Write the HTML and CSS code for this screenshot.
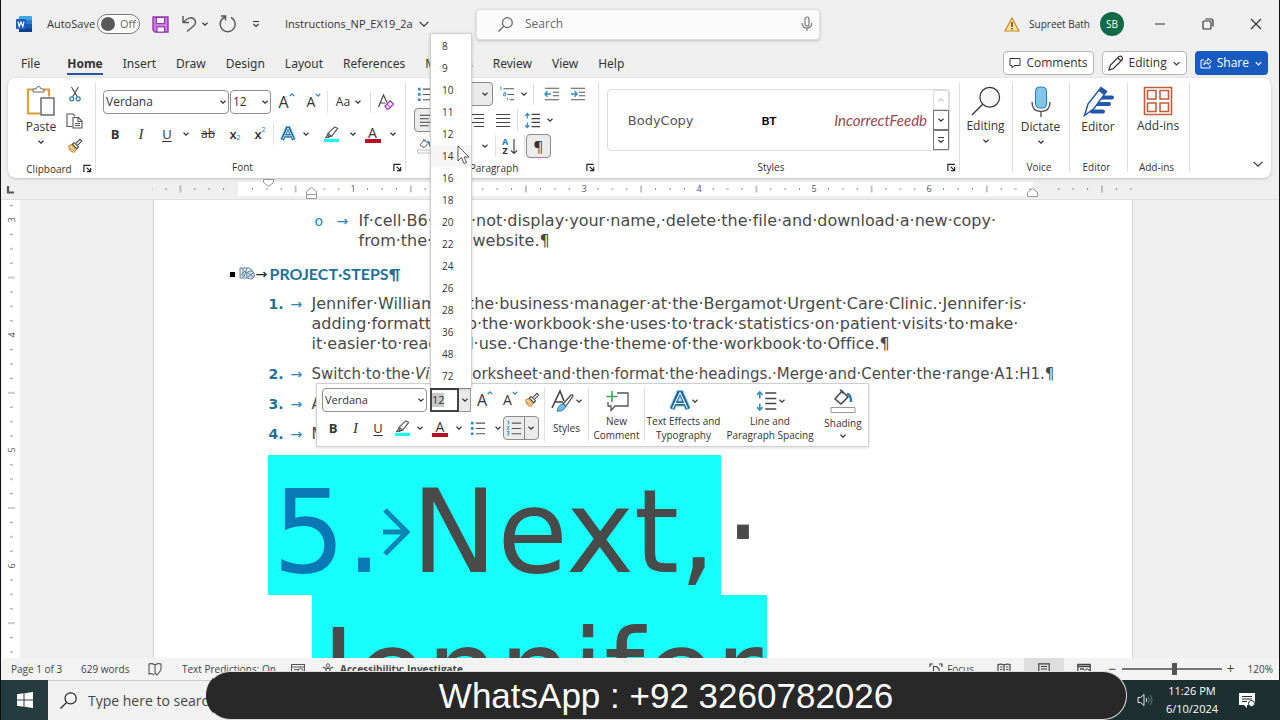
FILE: index.html
```html
<!DOCTYPE html>
<html lang="en">
<head>
<meta charset="utf-8">
<title>Instructions_NP_EX19_2a</title>
<link rel="stylesheet" href="styles.css">
</head>
<body>
<svg class="sprite" aria-hidden="true">
  <symbol id="chev" viewBox="0 0 8 8"><path d="M1.500 2.800 4 5.200 6.500 2.800" fill="none" stroke="currentColor" stroke-width="1.200" vector-effect="non-scaling-stroke"/></symbol>
  <symbol id="launch" viewBox="0 0 10 10"><path d="M1 9V1.500h7.500M4 4l4 4M8.500 4.500v4h-4" fill="none" stroke="#222" stroke-width="1.300"/></symbol>
  <symbol id="brush" viewBox="0 0 18 18"><path d="m2 9 4-2 5 5-3 4c-3 0-6-3-6-7z" fill="#fbe3b4" stroke="#d08a2a" stroke-width="1.300"/><path d="m6 7 2-2 5 5-2 2zM10 6l4.500-4.500 2 2L12 8" fill="#fff" stroke="#444" stroke-width="1.200"/><path d="m3 11 5 3M5 9l5 4" stroke="#d08a2a" fill="none"/></symbol>
  <symbol id="up" viewBox="0 0 6 6"><path d="m.8 4.200 2.200-2.400 2.200 2.400" fill="none" stroke="#2b7cae" stroke-width="1.200"/></symbol>
  <symbol id="down" viewBox="0 0 6 6"><path d="m.8 1.800 2.200 2.400 2.200-2.400" fill="none" stroke="#2b7cae" stroke-width="1.200"/></symbol>
  <symbol id="pen" viewBox="0 0 18 18"><path d="M1 13.500h16v3.500H1z" fill="#20f2f2"/><path d="m5 8 7.500-7 3 1.500L9 11H6zM6 8l3 3M5 9l-2 3h3l2-1.500" fill="#fff" stroke="#555" stroke-width="1.200"/></symbol>
  <symbol id="bullets" viewBox="0 0 18 18"><path d="M1 2h3v3H1zM1 8h3v3H1zM1 14h3v3H1z" fill="#2d8fc0"/><path d="M6.500 3.500H17M6.500 9.500H17M6.500 15.500H17" stroke="#555" stroke-width="1.200"/></symbol>
  <symbol id="numbers" viewBox="0 0 18 18"><path d="M1.500 2 3 1v4M1 7.500h2.500L1.200 10.500h2.600M1 13h2.600l-1.400 1.800q2 .2.900 1.800-.8.800-2 .1" fill="none" stroke="#2d8fc0"/><path d="M6.500 3.500H17M6.500 9.500H17M6.500 15.500H17" stroke="#555" stroke-width="1.200"/></symbol>
  <symbol id="multi" viewBox="0 0 18 18"><path d="m1 2 1.200-.8V5M5 7.500h2.500V11H5V9h2.500M9.500 13v3" fill="none" stroke="#2d8fc0"/><path d="M5 3h12M9.500 9.500H17M12 15.500h5" stroke="#555" stroke-width="1.200"/></symbol>
  <symbol id="outdent" viewBox="0 0 18 18"><path d="M1 2.500h16M10 7h7M10 11h7M1 15.500h16" stroke="#555" stroke-width="1.300"/><path d="M8 9H1m3-3L1 9l3 3" fill="none" stroke="#2d8fc0" stroke-width="1.500"/></symbol>
  <symbol id="indent" viewBox="0 0 18 18"><path d="M1 2.500h16M10 7h7M10 11h7M1 15.500h16" stroke="#555" stroke-width="1.300"/><path d="M1 9h7M5 6l3 3-3 3" fill="none" stroke="#2d8fc0" stroke-width="1.500"/></symbol>
  <symbol id="left" viewBox="0 0 16 16"><path d="M1 2.500h14M1 6.500h10M1 10.500h14M1 14.500h10" stroke="#444" stroke-width="1.200"/></symbol>
  <symbol id="right" viewBox="0 0 16 16"><path d="M1 2.500h14M5 6.500h10M1 10.500h14M5 14.500h10" stroke="#444" stroke-width="1.200"/></symbol>
  <symbol id="full" viewBox="0 0 16 16"><path d="M1 2.500h14M1 6.500h14M1 10.500h14M1 14.500h14" stroke="#444" stroke-width="1.200"/></symbol>
  <symbol id="spacing" viewBox="0 0 18 18"><path d="M3.500 2v5M1.300 4l2.200-2.500L5.700 4M3.500 11v5m-2.200-2 2.200 2.500L5.700 14" fill="none" stroke="#2d8fc0" stroke-width="1.300"/><path d="M8 2.500h9M8 7h9M8 11h9M8 15.500h9" stroke="#444" stroke-width="1.200"/></symbol>
  <symbol id="bucket" viewBox="0 0 26 26"><path d="m5 11 7-8 6 6-7 7zM10 1.500l3.500 4" fill="#fff" stroke="#444" stroke-width="1.500"/><path d="M17 6q4 0 4 8" fill="none" stroke="#2b7cae" stroke-width="2.400"/><path d="M1 19.500h24v5H1z" fill="#fff" stroke="#999"/></symbol>
  <symbol id="fx" viewBox="0 0 22 22"><path d="M3 19 10 3h2l7 16M6.500 13.500h9" fill="none" stroke="#83c6ec" stroke-width="6"/><path d="M3 19 10 3h2l7 16M6.500 13.500h9" fill="none" stroke="#1a6294" stroke-width="4"/><path d="M3.500 18.500 11 2.500l7.500 16M6.500 13.500h9" fill="none" stroke="#fff" stroke-width="1.100"/></symbol>
  <symbol id="lens" viewBox="0 0 32 32"><circle cx="20" cy="12" r="10.500" fill="#f7f7f7" stroke="currentColor" stroke-width="1.200" vector-effect="non-scaling-stroke"/><path d="M12.500 19.500 1 31" stroke="currentColor" stroke-width="1.300" vector-effect="non-scaling-stroke"/></symbol>
</svg>

<div class="window">
  <header class="titlebar">
    <div class="quick">
      <svg width="16" height="16" viewBox="0 0 16 16"><rect x="3" width="13" height="16" rx="1" fill="#41a5ee"/><path d="M3 4h13v4H3z" fill="#2b7cd3"/><path d="M3 8h13v4H3z" fill="#185abd"/><path d="M3 12h13v4H3z" fill="#103f91"/><rect y="3" width="10" height="10" rx="1" fill="#1b5cbe"/><path d="m2 5.500 1.200 5L5 6l1.800 4.500 1.200-5" fill="none" stroke="#fff" stroke-width="1.200"/></svg>
      <label for="autosave">AutoSave</label>
      <span class="toggle"><input type="checkbox" id="autosave"><span>Off</span></span>
      <button aria-label="Save"><svg width="17" height="17" viewBox="0 0 17 17"><path d="M1 1h15v15H3l-2-2z" fill="#c77fdb" stroke="#9437ad" stroke-width="1.400"/><path d="M4.500 1.500h8v6h-8zM5 11h7.500v5H5z" fill="#fff" stroke="#9437ad" stroke-width="1.200"/></svg></button>
      <button aria-label="Undo"><svg width="17" height="18" viewBox="0 0 17 18"><path d="M2 1v6.500h6M2.500 7q7-7 11-2.500Q16 8 12.500 11L6 16.500" fill="none" stroke="#555" stroke-width="1.400"/></svg></button>
      <button aria-label="Undo list"><svg width="8" height="8"><use href="#chev"/></svg></button>
      <button aria-label="Redo"><svg width="18" height="18" viewBox="0 0 18 18"><path d="M2 1h4.500v4.500M6 2Q1 4.500 1.200 9.500A7.500 7.500 0 1 0 12 2.500" fill="none" stroke="#555" stroke-width="1.400"/></svg></button>
      <button aria-label="Customize toolbar"><svg width="8" height="8" viewBox="0 0 8 8"><path d="M1 1.500h6M1.500 4 4 6.500 6.500 4" fill="none" stroke="#333" stroke-width="1.200"/></svg></button>
      <button class="doc-name">Instructions_NP_EX19_2a <svg width="14" height="14"><use href="#chev"/></svg></button>
    </div>
    <div class="search">
      <svg width="15" height="15"><use href="#lens"/></svg>
      <input type="search" aria-label="Search" placeholder="Search">
      <svg width="12" height="16" viewBox="0 0 12 16"><rect x="4" y="1" width="4" height="9" rx="2" fill="none" stroke="#777" stroke-width="1.200"/><path d="M1.200 7q0 5 4.800 5t4.800-5M6 12v3" fill="none" stroke="#777" stroke-width="1.200"/></svg>
    </div>
    <div class="account">
      <svg width="16" height="15" viewBox="0 0 16 15"><path d="M8 1 15 14H1z" fill="#ffe3a1" stroke="#c98a25" stroke-width="1.200"/><path d="M8 5v5M8 11v1.500" stroke="#5a4110" stroke-width="1.500"/></svg>
      <span class="user">Supreet Bath</span>
      <span class="avatar">SB</span>
      <button aria-label="Minimize"><svg width="12" height="12" viewBox="0 0 12 12"><path d="M1 6h10" stroke="#333"/></svg></button>
      <button aria-label="Restore"><svg width="12" height="12" viewBox="0 0 12 12"><rect x="1" y="3" width="8" height="8" rx="1" fill="none" stroke="#333" stroke-width="1.200"/><path d="M3.500 1H9q2 0 2 2v5.500" fill="none" stroke="#333" stroke-width="1.200"/></svg></button>
      <button aria-label="Close"><svg width="12" height="12" viewBox="0 0 12 12"><path d="m1 1 10 10M11 1 1 11" stroke="#333" stroke-width="1.200"/></svg></button>
    </div>
  </header>

  <nav class="tabs">
    <button class="file">File</button><button class="active">Home</button><button>Insert</button><button>Draw</button><button>Design</button><button>Layout</button><button>References</button><button>Mailings</button><button>Review</button><button>View</button><button>Help</button>
    <div class="tab-actions">
      <button class="outlined comments"><svg width="12" height="12" viewBox="0 0 12 12"><path d="M1 1.500h10v7H5L3 11V8.500H1z" fill="none" stroke="#333"/></svg>Comments</button>
      <button class="outlined"><svg width="16" height="16" viewBox="0 0 16 16"><path d="m1 15 1.500-5L11 1.500q2-1 3 .5t0 3L5.500 13.500zM10 3l3 3" fill="none" stroke="#333" stroke-width="1.200"/></svg>Editing<svg width="9" height="9"><use href="#chev"/></svg></button>
      <button class="share"><svg width="12" height="12" viewBox="0 0 12 12"><path d="M4 3H1v8h9V8M4 8q0-4.500 4-4.500V1.200L11.300 4.500 8 7.500V5.700q-3 0-4 2.300z" fill="none" stroke="#fff"/></svg>Share<svg width="9" height="9"><use href="#chev"/></svg></button>
    </div>
  </nav>

  <section class="ribbon">
    <div class="group clipboard">
      <div class="group-body">
        <button class="big-btn"><svg width="30" height="31" viewBox="0 0 30 31"><path d="M9 3.500H2v24h12M18 3.500h5v7" fill="none" stroke="#dda13b" stroke-width="2.200"/><path d="M7 6V3h3q.5-2.500 2.500-2.500T15 3h3v3z" fill="#fff" stroke="#666"/><rect x="15" y="12" width="13" height="17" fill="#fafafa" stroke="#555" stroke-width="1.300"/></svg><span>Paste</span><svg width="8" height="8"><use href="#chev"/></svg></button>
        <div class="clip-tools">
          <button aria-label="Cut"><svg width="12" height="16" viewBox="0 0 12 16"><path d="m2.500 1 6 10M9.500 1l-6 10" stroke="#444" stroke-width="1.100"/><circle cx="2.800" cy="12.800" r="2" fill="none" stroke="#2b7cae" stroke-width="1.200"/><circle cx="9.200" cy="12.800" r="2" fill="none" stroke="#2b7cae" stroke-width="1.200"/></svg></button>
          <button aria-label="Copy"><svg width="17" height="16" viewBox="0 0 17 16"><path d="M6 13.500H1V1h6l2 2M7 4.500h5.500L16 8v7H7zM12 5v3.500h4M9 10.500h5M9 12.500h5" fill="none" stroke="#555" stroke-width="1.100"/></svg></button>
          <button aria-label="Format painter"><svg width="16" height="16"><use href="#brush"/></svg></button>
        </div>
      </div>
      <footer><span>Clipboard</span><button aria-label="Clipboard settings"><svg width="9" height="9"><use href="#launch"/></svg></button></footer>
    </div>

    <div class="group font">
      <div class="group-body">
        <div class="font-row1">
          <span class="combo"><select aria-label="Font"><option>Verdana</option></select><svg width="8" height="8"><use href="#chev"/></svg></span>
          <span class="combo"><select aria-label="Font size"><option>12</option></select><svg width="8" height="8"><use href="#chev"/></svg></span>
          <button class="grow">A<svg width="6" height="6"><use href="#up"/></svg></button>
          <button class="shrink">A<svg width="6" height="6"><use href="#down"/></svg></button>
          <i class="sep"></i>
          <button class="case">Aa<svg width="8" height="8"><use href="#chev"/></svg></button>
          <i class="sep"></i>
          <button aria-label="Clear formatting"><svg width="18" height="18" viewBox="0 0 18 18"><path d="M1.500 14 6.500 2 10 9.500M3 10h5.500" fill="none" stroke="#444" stroke-width="1.200"/><path d="m8 13 5-5 3.500 3-5 5H10z" fill="#fff" stroke="#a33bb8" stroke-width="1.300"/><path d="m10 11 3.500 3" stroke="#a33bb8"/></svg></button>
        </div>
        <div class="font-row2">
          <button class="b">B</button><button class="i">I</button><button class="u">U</button><button aria-label="Underline style"><svg width="8" height="8"><use href="#chev"/></svg></button>
          <button class="s">ab</button><button class="x">x<sub>2</sub></button><button class="x">x<sup>2</sup></button><i class="sep"></i>
          <button aria-label="Text effects"><svg width="16" height="16"><use href="#fx"/></svg></button><button aria-label="More effects"><svg width="8" height="8"><use href="#chev"/></svg></button>
          <button aria-label="Highlight"><svg width="17" height="17"><use href="#pen"/></svg></button><button aria-label="Highlight colors"><svg width="8" height="8"><use href="#chev"/></svg></button>
          <button class="color">A</button><button aria-label="Font colors"><svg width="8" height="8"><use href="#chev"/></svg></button>
        </div>
      </div>
      <footer><span>Font</span><button aria-label="Font settings"><svg width="9" height="9"><use href="#launch"/></svg></button></footer>
    </div>

    <div class="group paragraph">
      <div class="group-body">
        <div class="para-row1">
          <button aria-label="Bullets"><svg width="16" height="16"><use href="#bullets"/></svg></button>
          <button aria-label="Bullet list"><svg width="8" height="8"><use href="#chev"/></svg></button>
          <button class="pressed split" aria-label="Numbering"><svg width="16" height="16"><use href="#numbers"/></svg><svg width="8" height="8"><use href="#chev"/></svg></button>
          <button aria-label="Multilevel"><svg width="16" height="16"><use href="#multi"/></svg></button><button aria-label="Multilevel list"><svg width="8" height="8"><use href="#chev"/></svg></button>
          <i class="sep"></i>
          <button aria-label="Decrease indent"><svg width="16" height="16"><use href="#outdent"/></svg></button>
          <button aria-label="Increase indent"><svg width="16" height="16"><use href="#indent"/></svg></button>
        </div>
        <div class="para-row2">
          <button class="pressed" aria-label="Align left"><svg width="14" height="14"><use href="#left"/></svg></button>
          <button aria-label="Center"><svg width="14" height="14"><use href="#full"/></svg></button>
          <button aria-label="Align right"><svg width="16" height="16"><use href="#right"/></svg></button>
          <button aria-label="Justify"><svg width="16" height="16"><use href="#full"/></svg></button>
          <i class="sep"></i>
          <button aria-label="Line spacing"><svg width="17" height="17"><use href="#spacing"/></svg></button><button aria-label="Spacing options"><svg width="8" height="8"><use href="#chev"/></svg></button>
        </div>
        <div class="para-row3">
          <button aria-label="Shading"><svg width="16" height="16"><use href="#bucket"/></svg></button>
          <button aria-label="Borders"><svg width="16" height="16" viewBox="0 0 16 16"><path d="M1 1h14v14H1zM8 1v14M1 8h14" fill="none" stroke="#666" stroke-dasharray="1 1"/></svg></button>
          <button aria-label="Border list"><svg width="8" height="8"><use href="#chev"/></svg></button>
          <i class="sep"></i>
          <button class="sort" aria-label="Sort"><span><b>A</b><b>Z</b></span><svg width="8" height="17" viewBox="0 0 8 17"><path d="M4 1v14.500M1 12.500l3 3 3-3" fill="none" stroke="#444" stroke-width="1.200"/></svg></button>
          <i class="sep"></i>
          <button class="pressed pilcrow">¶</button>
        </div>
      </div>
      <footer><span>Paragraph</span><button aria-label="Paragraph settings"><svg width="9" height="9"><use href="#launch"/></svg></button></footer>
    </div>

    <div class="group styles">
      <div class="group-body">
        <div class="gallery">
          <button class="st-body">BodyCopy</button><button class="st-bt">BT</button><button class="st-inc">IncorrectFeedb</button>
          <div class="gallery-nav">
            <button aria-label="Previous styles" disabled><svg width="8" height="8" viewBox="0 0 8 8"><path d="M1.500 5.200 4 2.800l2.500 2.400" fill="none" stroke="#aaa"/></svg></button>
            <button aria-label="Next styles"><svg width="8" height="8"><use href="#chev"/></svg></button>
            <button aria-label="More styles"><svg width="8" height="8" viewBox="0 0 8 8"><path d="M1 1.500h6M1.500 4 4 6.500 6.500 4" fill="none" stroke="#333" stroke-width="1.200"/></svg></button>
          </div>
        </div>
      </div>
      <footer><span>Styles</span><button aria-label="Style settings"><svg width="9" height="9"><use href="#launch"/></svg></button></footer>
    </div>

    <div class="group w-editing">
      <div class="group-body"><button class="big-btn"><svg width="30" height="30"><use href="#lens"/></svg><span>Editing</span><svg width="8" height="8"><use href="#chev"/></svg></button></div>
      <footer></footer>
    </div>
    <div class="group w-voice">
      <div class="group-body"><button class="big-btn"><svg width="20" height="31" viewBox="0 0 20 31"><rect x="4.500" y="1" width="11" height="21" rx="4" fill="#83c4ea" stroke="#2b7cae"/><path d="M1 16q0 9.500 9 9.500t9-9.500M10 25.500V31" fill="none" stroke="#555" stroke-width="1.400"/></svg><span>Dictate</span><svg width="8" height="8"><use href="#chev"/></svg></button></div>
      <footer><span>Voice</span></footer>
    </div>
    <div class="group w-editor">
      <div class="group-body"><button class="big-btn"><svg width="31" height="31" viewBox="0 0 31 31"><path d="M17 11.500h12M14 18h12M9 25.500h11" stroke="#2358a8" stroke-width="4" stroke-linecap="round"/><path d="M1.500 29.500 5 18 18 1.500l5.500 4L11 22.500z" fill="#fff" stroke="#2358a8" stroke-width="1.500"/><path d="m18 1.500 5.500 4L21 9l-5.500-4z" fill="#2358a8"/></svg><span>Editor</span></button></div>
      <footer><span>Editor</span></footer>
    </div>
    <div class="group w-addins">
      <div class="group-body"><button class="big-btn"><svg width="30" height="30" viewBox="0 0 30 30"><path d="M1.500 1.500h27v27h-27zM4.500 4.500H13V13H4.500zM17 4.500h8.500V13H17zM4.500 17H13v8.500H4.500zM17 17h8.500v8.500H17z" fill="none" stroke="#bd5f3e" stroke-width="1.600"/></svg><span>Add-ins</span></button></div>
      <footer><span>Add-ins</span></footer>
    </div>
    <div class="group w-end"><button class="collapse" aria-label="Collapse ribbon"><svg width="14" height="14"><use href="#chev"/></svg></button></div>
  </section>

  <div class="hruler">
    <svg class="corner" width="10" height="10" viewBox="0 0 10 10"><path d="M2 1v6.500h6" fill="none" stroke="#555" stroke-width="2.200"/></svg>
    <svg class="scale" width="982" height="22" viewBox="0 0 982 22">
      <defs><pattern id="hticks" x="86" y="0" width="115.200" height="22" patternUnits="userSpaceOnUse"><path d="M14.400 10v2M28.800 10v2M43.200 10v2M72 10v2M86.400 10v2M100.800 10v2M57.600 7.500v7" stroke="#888"/></pattern></defs>
      <path d="M86 4h795v14H86z" fill="#fff"/>
      <path d="M0 0h982v22H0z" fill="url(#hticks)"/>
      <g class="ruler-text"><text x="201" y="14">1</text><text x="316" y="14">2</text><text x="432" y="14">3</text><text x="547" y="14">4</text><text x="662" y="14">5</text><text x="777" y="14">6</text></g>
      <path d="M111.500 1.500h10v3l-5 4-5-4zM154.500 20.500v-7l5-4 5 4v7zM154.500 16.500h10M875.500 18.500v-4l5-4 5 4v4z" fill="#fff" stroke="#999"/>
    </svg>
  </div>

  <main class="workspace">
    <svg class="vruler" width="18" height="458" viewBox="0 0 18 458">
      <defs><pattern id="vticks" x="0" y="20" width="18" height="115.200" patternUnits="userSpaceOnUse"><path d="M8 14.400h3M8 28.800h3M8 43.200h3M8 72h3M8 86.400h3M8 100.800h3M6 57.600h7" stroke="#999"/></pattern></defs>
      <path d="M0 0h18v458H0z" fill="url(#vticks)"/>
      <g class="ruler-text"><text transform="translate(13 20) rotate(-90)">3</text><text transform="translate(13 135) rotate(-90)">4</text><text transform="translate(13 250) rotate(-90)">5</text><text transform="translate(13 366) rotate(-90)">6</text></g>
    </svg>
    <article class="page">
      <div class="sub-item"><span class="ring">o</span><span class="tab">→</span><p>If·cell·B6·does·not·display·your·name,·delete·the·file·and·download·a·new·copy·<br>from·the·SAM·website.¶</p></div>
      <h1><span class="square"></span><svg width="17" height="16" viewBox="0 0 17 16"><path d="M1 2h9l3 2v8H1zM4 2v9M1 10l5-5 7 7M8 2l-3 9" fill="#e4edf3" stroke="#64849a"/><circle cx="11.500" cy="9" r="4" fill="#cfdde6" stroke="#64849a"/><path d="m9 7 5 4M14 7l-5 4" stroke="#64849a"/></svg><span class="tab">→</span>PROJECT·STEPS¶</h1>
      <ol>
        <li><b>1.</b><span class="tab">→</span><p>Jennifer·Williams·is·the·business·manager·at·the·Bergamot·Urgent·Care·Clinic.·Jennifer·is·<br>adding·formatting·to·the·workbook·she·uses·to·track·statistics·on·patient·visits·to·make·<br>it·easier·to·read·and·use.·Change·the·theme·of·the·workbook·to·Office.¶</p></li>
        <li class="small"><b>2.</b><span class="tab">→</span><p>Switch·to·the·<em>Visits</em>·worksheet·and·then·format·the·headings.·Merge·and·Center·the·range·A1:H1.¶</p></li>
        <li class="small"><b>3.</b><span class="tab">→</span><p>A</p></li>
        <li class="small"><b>4.</b><span class="tab">→</span><p>M</p></li>
      </ol>
      <div class="huge">
        <div><span class="marked"><span class="num">5.</span><svg width="29" height="54" viewBox="0 0 29 54"><path d="M1 27h23M3 5l22 22L3 49" fill="none" stroke="#0d86b5" stroke-width="5"/></svg>Next,</span><span class="after">·</span></div>
        <div class="second"><span class="marked">Jennifer</span></div>
      </div>
    </article>
  </main>

  <footer class="statusbar">
    <span class="st-page">Page 1 of 3</span><span class="st-words">629 words</span>
    <svg width="14" height="13" viewBox="0 0 14 13"><path d="M7 2Q4 0 1 1v10q3-1 5 1M7 2q3-2 6-1v6M7 2v9M7 10l2 2 4-5" fill="none" stroke="#555" stroke-width="1.100"/></svg>
    <span class="st-pred">Text Predictions: On</span>
    <svg width="14" height="13" viewBox="0 0 14 13"><path d="M.5 1.500h13v10H.5zM.5 4h13M3 6.500h4" fill="none" stroke="#555" stroke-width="1.200"/><circle cx="9.500" cy="8" r="2.500" fill="none" stroke="#555"/></svg>
    <svg class="acc" width="12" height="13" viewBox="0 0 12 13"><circle cx="6" cy="2.500" r="1.700" fill="none" stroke="#555"/><path d="M.8 4 4 5.500V8l-2 4M11.200 4 8 5.500V8l2 4M4 5.500h4" fill="none" stroke="#555" stroke-width="1.200"/></svg>
    <b>Accessibility: Investigate</b>
    <div class="views">
      <button class="focus"><svg width="14" height="13" viewBox="0 0 14 13"><path d="M1 4V1h3M10 1h3v3M4.500 12V3.500h3L10 6v6z" fill="none" stroke="#444" stroke-width="1.200"/></svg>Focus</button>
      <button aria-label="Read mode"><svg width="14" height="13" viewBox="0 0 14 13"><path d="M7 2Q4 .5 1 1.500v10h12v-10Q10 .5 7 2v10M3 4h2.500M3 6.500h2.500M9 4h2.500M9 6.500h2.500" fill="none" stroke="#444" stroke-width="1.200"/></svg></button>
      <button class="current" aria-label="Print layout"><svg width="12" height="13" viewBox="0 0 12 13"><path d="M.8.800h10.400v12H.8zM3 3.500h6M3 6h6M3 8.500h6" fill="none" stroke="#444" stroke-width="1.200"/></svg></button>
      <button aria-label="Web layout"><svg width="14" height="13" viewBox="0 0 14 13"><path d="M.8 1.500h12.400v10H.8zM.8 3.500h12.400M3 6h4" fill="none" stroke="#444" stroke-width="1.300"/><circle cx="10" cy="8.500" r="2.500" fill="none" stroke="#444"/></svg></button>
      <button class="zoom-step" aria-label="Zoom out">−</button>
      <input type="range" aria-label="Zoom" min="0" max="100" value="53">
      <button class="zoom-step" aria-label="Zoom in">+</button>
      <span class="percent">120%</span>
    </div>
  </footer>

  <section class="mini">
    <div class="mini-left">
      <div class="mini-row1">
        <span class="combo"><select aria-label="Font name"><option>Verdana</option></select><svg width="8" height="8"><use href="#chev"/></svg></span>
        <div class="size">
          <input aria-label="Size" value="12"><button aria-label="Sizes"><svg width="8" height="8"><use href="#chev"/></svg></button>
          <div class="sizes"><button>8</button><button>9</button><button>10</button><button>11</button><button>12</button><button class="hover">14</button><button>16</button><button>18</button><button>20</button><button>22</button><button>24</button><button>26</button><button>28</button><button>36</button><button>48</button><button>72</button>
            <svg class="cursor" width="14" height="20" viewBox="0 0 14 20"><path d="M1 1v15l3.500-3.500L7 18.500l2.500-1L7.200 12H12z" fill="#fff" stroke="#555"/></svg>
          </div>
        </div>
        <button class="grow">A<svg width="6" height="6"><use href="#up"/></svg></button>
        <button class="shrink">A<svg width="6" height="6"><use href="#down"/></svg></button>
        <button aria-label="Format painter"><svg width="16" height="16"><use href="#brush"/></svg></button>
      </div>
      <div class="mini-row2">
        <button class="b">B</button><button class="i">I</button><button class="u">U</button>
        <button aria-label="Highlight"><svg width="17" height="17"><use href="#pen"/></svg></button><button aria-label="Highlight colors"><svg width="8" height="8"><use href="#chev"/></svg></button>
        <button class="color">A</button><button aria-label="Font colors"><svg width="8" height="8"><use href="#chev"/></svg></button>
        <button aria-label="Bullets"><svg width="16" height="16"><use href="#bullets"/></svg></button><button aria-label="Bullet list"><svg width="8" height="8"><use href="#chev"/></svg></button>
        <button class="pressed split" aria-label="Numbering"><svg width="16" height="16"><use href="#numbers"/></svg><i class="bar"></i><svg width="8" height="8"><use href="#chev"/></svg></button>
      </div>
    </div>
    <button class="mini-big m-styles"><span><svg width="24" height="24" viewBox="0 0 24 24"><path d="M1 19 9 2l4 10M4 13h8" fill="none" stroke="#444" stroke-width="1.600"/><path d="m12 15 8-9q2-1 2 1l-7 10z" fill="#fff" stroke="#444" stroke-width="1.200"/><path d="M12 15q-4 0-6 7 7 1 9-5z" fill="#79bde6" stroke="#2b7cae"/></svg><svg width="8" height="8"><use href="#chev"/></svg></span><em>Styles</em></button>
    <button class="mini-big m-comment"><span><svg width="24" height="22" viewBox="0 0 24 22"><path d="M12 3h11v13H10l-4 4.500V16H3v-4" fill="none" stroke="#555" stroke-width="1.300"/><path d="M7 1v11M1.500 6.500h11" stroke="#36a95a" stroke-width="1.600"/></svg></span><em>New<br>Comment</em></button>
    <button class="mini-big m-fx"><span><svg width="22" height="22"><use href="#fx"/></svg><svg width="8" height="8"><use href="#chev"/></svg></span><em>Text Effects and<br>Typography</em></button>
    <button class="mini-big m-line"><span><svg width="23" height="22"><use href="#spacing"/></svg><svg width="8" height="8"><use href="#chev"/></svg></span><em>Line and<br>Paragraph Spacing</em></button>
    <button class="mini-big m-shade"><span><svg width="26" height="26"><use href="#bucket"/></svg></span><em>Shading</em><svg width="8" height="8"><use href="#chev"/></svg></button>
  </section>
</div>

<div class="taskbar">
  <button class="start" aria-label="Start"><svg width="16" height="16" viewBox="0 0 16 16"><path d="m0 2.200 6.500-.9v6.200H0zM7.500 1.200 16 0v7.500H7.500zM0 8.500h6.500v6.200L0 13.800zM7.500 8.500H16V16l-8.500-1.200z" fill="#fff"/></svg></button>
  <label class="task-search"><svg width="17" height="17"><use href="#lens"/></svg><input type="text" placeholder="Type here to search"></label>
  <div class="tray">
    <svg width="16" height="14" viewBox="0 0 16 14"><path d="M1 4.500h2.500L7 1.500v11L3.500 9.500H1z" fill="none" stroke="#e6eaea"/><path d="M9 5q1.500 2 0 4" fill="none" stroke="#e6eaea"/><path d="M11 3.500q3 3.500 0 7M13 2q4 5 0 10" fill="none" stroke="#6f7d7e"/></svg>
    <div class="clock"><span>11:26 PM</span><span>6/10/2024</span></div>
    <svg width="17" height="17" viewBox="0 0 17 17"><path d="M0 1h16v12H8v3l-3-3H0z" fill="#fff"/><path d="M3 4.500h10M3 7h10M3 9.500h5" stroke="#1c3031"/><circle cx="12.500" cy="11.500" r="3" fill="#fff" stroke="#1c3031"/></svg>
  </div>
  <div class="banner">WhatsApp : +92 3260782026</div>
</div>
</body>
</html>
```

FILE: styles.css
```css
* { box-sizing: border-box; }
body {
  margin: 0;
  height: 100vh;
  display: flex;
  flex-direction: column;
  overflow: hidden;
  background: #efefef;
  color: #333;
  font: 11px/16px "Open Sans", "Noto Sans", sans-serif;
}
.sprite { position: absolute; width: 0; height: 0; }
svg { display: block; flex: none; }
button {
  display: flex;
  align-items: center;
  justify-content: center;
  padding: 0;
  border: 0;
  background: none;
  color: inherit;
  font: inherit;
  white-space: nowrap;
}
input, select { font: inherit; color: inherit; border: 0; background: none; padding: 0; margin: 0; outline: 0; min-width: 0; }
.sep { width: 1px; height: 22px; background: #e1e1e1; }
.pressed { background: #ebebeb; border: 1px solid #8c8c8c; border-radius: 4px; }

.window {
  position: relative;
  flex: 1;
  min-height: 0;
  display: flex;
  flex-direction: column;
  border: solid #111;
  border-width: 0 1px;
}

/* Title bar */
.titlebar { display: flex; align-items: center; height: 48px; flex: none; }
.quick {
  flex: none;
  width: 475px;
  padding-left: 15px;
  display: grid;
  grid-template-columns: 31px 50px 55px 29px 20px 18px 33px 33px auto;
  align-items: center;
  justify-items: start;
}
.toggle {
  width: 43px;
  height: 20px;
  display: flex;
  align-items: center;
  gap: 5px;
  padding-left: 3px;
  border: 1px solid #777;
  border-radius: 10px;
  background: #fff;
  color: #666;
}
.toggle input { appearance: none; width: 14px; height: 14px; border-radius: 50%; background: #5a5a5a; }
.doc-name { gap: 4px; }
.search {
  flex: 0 1 344px;
  height: 31px;
  display: flex;
  align-items: center;
  gap: 12px;
  padding: 0 6px 0 21px;
  background: #fbfbfb;
  border: 1px solid #e0e0e0;
  border-radius: 4px;
  box-shadow: 0 1px 3px #0003;
  color: #666;
}
.search input { flex: 1; font-size: 12px; }
.search input::placeholder { color: #666; }
.account { margin-left: auto; display: flex; align-items: center; padding-right: 17px; }
.account > svg { margin-right: 9px; }
.user { font-size: 10px; }
.avatar {
  width: 24px;
  height: 24px;
  margin: 0 30px 0 10px;
  border-radius: 50%;
  background: #0f6b47;
  color: #fff;
  font-size: 10px;
  line-height: 24px;
  text-align: center;
}
.account button { margin-left: 36px; }
.account .avatar + button { margin-left: 0; }

/* Tabs */
.tabs { display: flex; align-items: center; gap: 20px; height: 30px; flex: none; padding: 0 11px 0 20px; font-size: 12px; }
.tabs > button { height: 24px; padding-top: 3px; border-bottom: 2px solid transparent; font-family: "Noto Sans", sans-serif; }
.tabs > .file { margin-right: 7px; }
.tabs > .active { font-weight: 700; border-color: #2b579a; }
.tab-actions { margin-left: auto; display: flex; gap: 8px; align-items: center; }
.tab-actions button { height: 24px; gap: 5px; padding: 0 5px; border-radius: 4px; }
.tab-actions .outlined { background: #fff; border: 1px solid #b5b5b5; }
.tab-actions .share { background: #185abd; color: #fff; }

/* Ribbon */
.ribbon {
  display: flex;
  flex: none;
  height: 100px;
  margin: 0 8px 0 7px;
  background: #fff;
  border-radius: 8px;
  box-shadow: 0 1px 3px #0003;
}
.group {
  display: flex;
  flex-direction: column;
  flex: none;
  position: relative;
}
.group:not(.clipboard)::before {
  content: "";
  position: absolute;
  inset: 4px auto 6px 0;
  width: 1px;
  background: #dedede;
}
.group-body { flex: 1; }
.group footer { height: 21px; padding-bottom: 1px; display: grid; grid-template-columns: 1fr auto 1fr; align-items: center; padding-right: 3px; font-size: 10px; }
.group footer span { grid-column: 2; }
.group footer button { grid-column: 3; justify-self: end; }
.clipboard { width: 87px; }
.clipboard footer { margin-left: -2px; }
.font { width: 310px; padding-left: 8px; }
.font footer { margin-left: -20px; }
.paragraph { width: 193px; }
.paragraph footer { margin-left: -12px; }
.styles { flex: 1; }
.styles footer { margin-left: -12px; }
.w-editing { width: 53px; }
.w-voice { width: 57px; }
.w-editor { width: 58px; }
.w-addins { width: 62px; }
.w-end { width: 82px; align-items: flex-end; justify-content: flex-end; padding: 0 6px 7px 0; }
.big-btn { flex-direction: column; justify-content: flex-start; width: 100%; padding-top: 8px; font-size: 12px; }
.big-btn span { margin: 2px 0 3px; }
.clipboard .group-body { display: flex; }
.clipboard .big-btn { width: 58px; padding-left: 8px; }
.clip-tools { display: grid; grid-template-rows: 32px 22px 28px; }

.combo { display: grid; grid-template-columns: 1fr; align-items: center; height: 24px; border: 1px solid #8f8f8f; border-radius: 4px; background: #fff; }
.combo select { grid-area: 1 / 1; appearance: none; width: 100%; height: 100%; padding-left: 2px; font-size: 12px; line-height: 20px; }
.combo svg { grid-area: 1 / 1; justify-self: end; margin-right: 1px; pointer-events: none; }
.font-row1, .font-row2, .para-row1, .para-row2, .para-row3 { display: grid; align-items: center; }
.font-row1 > .sep, .font-row2 > .sep { justify-self: start; }
.font-row1 { grid-template-columns: 126px 41px 29px 24px 1px 40px 1px 28px; column-gap: 1px; height: 24px; margin-top: 12px; }
.font-row2 { grid-template-columns: 24px 28px 24px 14px 30px 24px 26px 1px 28px 8px 42px 1px 39px 1px; height: 28px; margin-top: 6px; }
.grow, .shrink { align-items: flex-start; line-height: 20px; }
.grow { font-size: 16px; }
.shrink { font-size: 14px; }
.case { gap: 4px; font-size: 12px; }
.b { font-weight: 700; font-size: 13px; }
.i { font: italic 15px "Liberation Serif", serif; }
.u { text-decoration: underline; text-underline-offset: 2px; font-size: 13px; }
.s { text-decoration: line-through; font-size: 12px; }
.x { font-size: 13px; font-weight: 600; }
.x sub, .x sup { color: #2b7cae; font-size: 7px; line-height: 8px; font-weight: 400; }
.x sub { align-self: flex-end; }
.x sup { align-self: flex-start; }
.color { justify-self: center; width: 16px; height: 17px; border-bottom: 4px solid #b90f22; font-size: 14px; line-height: 13px; }
.paragraph .group-body { padding: 4px 0 0 9px; }
.para-row1 { grid-template-columns: 22px 12px 45px 27px 8px 11px 26px 26px; height: 24px; }
.para-row1 .pressed, .para-row2 .pressed { height: 24px; }
.split { justify-content: space-between; padding: 0 3px 0 2px; }
.para-row1 .sep, .para-row2 .sep, .para-row3 .sep { justify-self: center; }
.para-row2 { grid-template-columns: 24px 26px 26px 26px 3px 26px 10px; height: 24px; margin-top: 2px; }
.para-row3 { grid-template-columns: 22px 42px 14px 6px 24px 4px 25px; height: 24px; margin-top: 2px; }
.sort { gap: 2px; }
.sort span { display: grid; line-height: 9px; font-size: 9px; }
.sort b:first-child { color: #2b7cae; }
.pilcrow { height: 24px; font-size: 15px; }

.gallery { display: grid; grid-template-columns: 1fr 1fr 1fr 16px; height: 62px; margin: 11px 9px 0 9px; border: 1px solid #dcdcdc; border-radius: 4px; }
.gallery > button { overflow: hidden; margin: 0 6px 0 3px; }
.st-body { font: 13px "DejaVu Sans", sans-serif; color: #555; }
.st-bt { font: 700 12px Lato, sans-serif; color: #000; }
.gallery > .st-inc { justify-content: flex-end; font: italic 15px Lato, sans-serif; color: #97474e; }
.gallery-nav { display: grid; grid-template-rows: 1fr 1fr 1fr; }
.gallery-nav button { border: 1px solid #777; }
.gallery-nav button:disabled { border-color: #dcdcdc; }

/* Rulers and page */
.hruler { display: flex; align-items: center; flex: none; height: 22px; padding-right: 14px; border-bottom: 1px solid #e0e0e0; }
.corner { margin: 2px 4px 0 5px; }
.scale { margin: 0 auto; }
.ruler-text { font-size: 9px; fill: #555; text-anchor: middle; }
.workspace { flex: 1; min-height: 0; display: flex; align-items: flex-start; padding-right: 14px; overflow: hidden; }
.vruler { background: #fff; margin-left: 1px; }
.page {
  width: 980px;
  height: 100%;
  margin: 0 auto;
  padding: 11px 0 0 115px;
  overflow: hidden;
  background: #fff;
  border: solid #d8d8d8;
  border-width: 0 1px;
  color: #4a4a4a;
  font: 16px/20px "DejaVu Sans", sans-serif;
  font-variant-ligatures: none;
  white-space: nowrap;
}
.page p { margin: 0; }
.tab { color: #2a86b8; font-family: "Open Sans", "DejaVu Sans", sans-serif; font-size: 14px; }
.sub-item { display: grid; grid-template-columns: 22px 22px 1fr; padding-left: 46px; }
.ring { color: #2a86a0; font-size: 14px; }
.page h1 { display: flex; align-items: center; height: 20px; margin: 13px 0 10px -39px; font: 700 16px/20px Lato, sans-serif; color: #1f7199; }
.page h1 .tab { color: #222; width: 14px; font-weight: 400; }
.square { width: 5px; height: 5px; margin-right: 4px; background: #000; }
.page ol { display: grid; gap: 10px; margin: 0; padding: 0; list-style: none; }
.page li { display: grid; grid-template-columns: 22px 21px 1fr; }
.page li b { color: #1f7199; font-size: 14px; }
.page .small { font-size: 15px; }
.huge { margin: 11px 0 0 -1px; font-size: 115px; line-height: 126px; }
.huge div { display: flex; }
.huge .second { padding-left: 44px; }
.marked { display: flex; align-items: center; padding: 14px 5px 0; background: #17fffa; }
.after { padding: 14px 4px 0; }
.num { color: #0a78b4; }
.second .marked { padding: 14px 5px 0 10px; }

/* Status bar */
.statusbar { display: flex; align-items: center; flex: none; height: 22px; padding-left: 10px; background: #f3f3f3; font-size: 10px; color: #444; }
.st-page { width: 70px; }
.st-words { width: 67px; }
.st-pred { width: 109px; margin-left: 20px; }
.acc { margin: 0 6px 0 17px; }
.views { display: flex; align-items: center; height: 100%; margin-left: auto; padding-right: 6px; }
.views button { width: 40px; height: 100%; }
.views .focus { width: 44px; gap: 4px; margin-right: 10px; }
.views .current { background: #dedede; }
.views .zoom-step { width: 18px; font-size: 14px; }
.views input { appearance: none; width: 100px; height: 2px; background: #777; }
.views input::-webkit-slider-thumb { appearance: none; width: 5px; height: 12px; background: #555; }
.percent { margin-left: 8px; }

/* Floating toolbar */
.mini {
  position: absolute;
  top: 383px;
  left: calc(50% - 324px);
  display: flex;
  height: 64px;
  padding: 3px 0 4px 5px;
  background: #fff;
  border: 1px solid #cfcfcf;
  box-shadow: 0 1px 3px #0002;
}
.mini-row1 { display: grid; grid-template-columns: 108px 41px 28px 23px 20px; align-items: center; height: 25px; }
.mini .combo { margin-right: 3px; }
.mini .combo select { font-size: 11px; }
.mini-row2 { display: grid; grid-template-columns: 22px 23px 22px 26px 10px 30px 8px 30px 10px 36px; align-items: center; height: 24px; margin-top: 4px; }
.mini-row2 .pressed { height: 24px; }
.bar { width: 1px; height: 22px; background: #8c8c8c; }
.size { position: relative; display: grid; grid-template-columns: 29px 12px; height: 24px; }
.size > input { width: 100%; height: 100%; border: 2px solid #444; background: linear-gradient(#c8c8c8, #c8c8c8) 0 50% / 12px 14px no-repeat #fff; }
.size > button { background: #eaeaea; border: 1px solid #999; border-left: 0; }
.sizes { position: absolute; bottom: 100%; left: 0; width: 42px; padding: 1px 0; display: grid; background: #fff; border: 1px solid #cfcfcf; border-bottom: 0; box-shadow: 0 1px 3px #0003; font-size: 10px; }
.sizes button { height: 22px; justify-content: flex-start; padding-left: 11px; }
.sizes .hover { background: #f5f5f5; }
.cursor { position: absolute; left: 26px; top: 111px; }
.mini-big { flex-direction: column; justify-content: flex-start; border-left: 1px solid #e1e1e1; font-size: 10px; line-height: 14px; }
.mini-big span { display: flex; align-items: center; height: 27px; flex: none; }
.mini-big em { font-style: normal; }
.m-styles { width: 44px; margin-left: 2px; }
.m-styles em { margin-top: 7px; }
.m-comment { width: 56px; }
.m-fx { width: 78px; }
.m-line, .m-shade { border-left: 0; }
.m-line { width: 96px; }
.m-shade { width: 50px; }
.m-shade em { margin: 2px 0; }

/* Taskbar */
.taskbar { position: relative; display: flex; flex: none; height: 40px; background: #1c3031; border-left: 1px solid #111; color: #fff; }
.start { width: 47px; background: #243c40; }
.task-search { display: flex; align-items: center; gap: 11px; width: 344px; padding-left: 12px; background: #f1f1f1; color: #222; border-top: 1px solid #ccc; font-size: 14px; }
.task-search input { flex: 1; }
.task-search input::placeholder { color: #444; }
.tray { margin-left: auto; display: flex; align-items: center; padding-right: 24px; }
.clock { display: grid; line-height: 18px; width: 76px; margin: 0 9px 0 1px; text-align: center; }
.banner {
  position: absolute;
  bottom: 0;
  left: 16%;
  width: 72%;
  height: 49px;
  border: 1px solid #ddd;
  border-left-color: #282828;
  border-radius: 24px;
  background: #282828;
  font: 35px/48px "Liberation Sans", sans-serif;
  text-align: center;
}
```
